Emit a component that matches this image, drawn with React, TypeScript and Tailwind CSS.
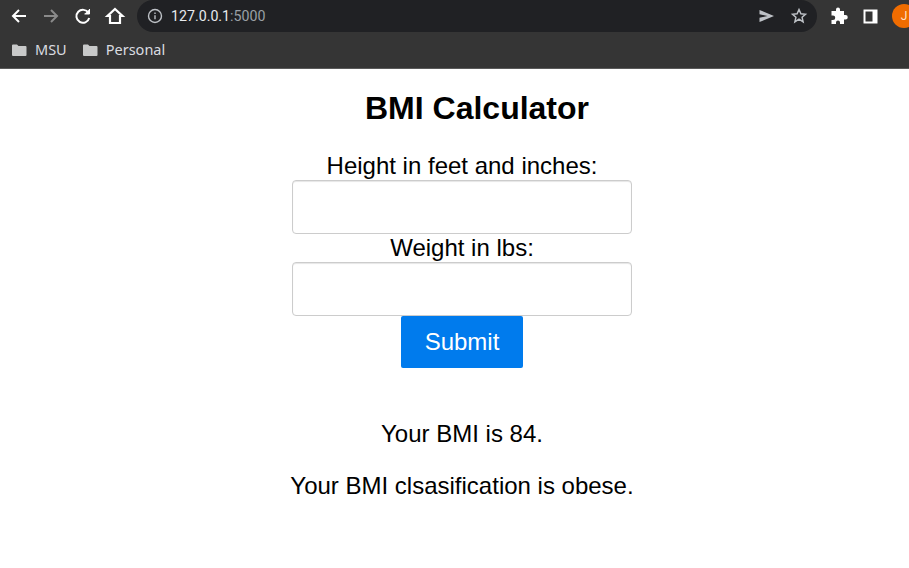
import React from "react";

const Folder = () => (
  <svg width="16" height="16" viewBox="0 0 16 16" fill="#c8c9c9" className="shrink-0">
    <path d="M1 3.500a1 1 0 0 1 1-1h4l1.500 1.500H14.500a1 1 0 0 1 1 1V13a1 1 0 0 1-1 1H2a1 1 0 0 1-1-1z" />
  </svg>
);

const Toolbar = () => (
  <div className="h-[69px] bg-[#353535] border-b border-[#5a5a5a] font-['Roboto',sans-serif] overflow-hidden shrink-0">
    <div className="h-[32px] flex items-center w-[920px]">
      <div className="flex items-center w-[137px] shrink-0 pl-[8px] gap-[10px]">
        <svg width="22" height="22" viewBox="0 0 22 22" fill="none" stroke="#ffffff" strokeWidth="2">
          <path d="M18 11H5M11 5l-6 6 6 6" />
        </svg>
        <svg width="22" height="22" viewBox="0 0 22 22" fill="none" stroke="#8a8a8a" strokeWidth="2">
          <path d="M4 11h13M11 5l6 6-6 6" />
        </svg>
        <svg width="22" height="22" viewBox="0 0 22 22" fill="none" stroke="#ffffff" strokeWidth="2">
          <path d="M16.500 8a6.500 6.500 0 1 0 .7 5" />
          <path d="M17.500 4v5h-5" fill="#ffffff" strokeWidth="1" />
        </svg>
        <svg width="22" height="22" viewBox="0 0 22 22" fill="none" stroke="#ffffff" strokeWidth="2.200">
          <path d="M11 4l7.500 7H16v7H6v-7H3.500z" />
        </svg>
      </div>
      <div className="w-[680px] shrink-0 h-[32px] rounded-full bg-[#202124] flex items-center pl-[10px] pr-[9px]">
        <svg width="16" height="16" viewBox="0 0 16 16" fill="none" stroke="#bdc1c6" strokeWidth="1.400">
          <circle cx="8" cy="8" r="6.500" />
          <path d="M8 7.200v4M8 4.500v1.500" />
        </svg>
        <span className="ml-[8px] text-[14.200px] leading-none text-[#e8eaed]">
          127.0.0.1<span className="text-[#9aa0a6]">:5000</span>
        </span>
        <div className="ml-auto flex items-center gap-[14px]">
          <svg width="18" height="18" viewBox="0 0 18 18" fill="#bdc1c6">
            <path d="M1.500 3 16 9 1.500 15V10.800L9.500 9 1.500 7.200z" />
          </svg>
          <svg width="18" height="18" viewBox="0 0 18 18" fill="none" stroke="#bdc1c6" strokeWidth="1.500">
            <path d="M9 2.500l1.900 4.200 4.600.5-3.400 3.100 1 4.500L9 12.100l-4.100 2.700 1-4.500-3.400-3.100 4.600-.5z" />
          </svg>
        </div>
      </div>
      <div className="flex items-center ml-[12px] gap-[13px]">
        <svg width="19" height="19" viewBox="0 0 19 19" fill="#ffffff" className="shrink-0">
          <path d="M7 2.500a2 2 0 0 1 4 0V4h4v4h1.500a2.200 2.200 0 0 1 0 4.500H15V17h-4v-1.500a2 2 0 0 0-4 0V17H2.500v-4H4a2.200 2.200 0 0 0 0-4.500H2.500V4H7z" />
        </svg>
        <svg width="19" height="19" viewBox="0 0 19 19" fill="none" className="shrink-0">
          <path d="M2.500 2.500h14v14h-14z" fill="#ffffff" />
          <path d="M4.500 4.500h7v10h-7z" fill="#353535" />
        </svg>
        <div className="w-[24px] h-[24px] -ml-[1px] rounded-full bg-[#f06c00] shrink-0 flex items-center justify-center text-[12px] text-[#ffe0c8]">
          J
        </div>
      </div>
    </div>
    <div className="h-[35px] flex items-center pl-[11px] text-[14.500px] text-[#dadce0] font-['Noto_Sans',sans-serif]">
      <div className="flex items-center gap-[8px]">
        <Folder />
        <span>MSU</span>
      </div>
      <div className="flex items-center gap-[8px] ml-[15px]">
        <Folder />
        <span>Personal</span>
      </div>
    </div>
  </div>
);

const App = () => {
  return (
    <div className="w-[909px] h-[568px] bg-white overflow-hidden flex flex-col text-black font-['Liberation_Sans',Arial,sans-serif]">
      <Toolbar />
      <div className="pl-[15px] flex flex-col items-center text-[24px] leading-[27.600px]">
        <h1 className="pl-[30px] pt-[21px] text-[32px] leading-[36.800px] font-bold">BMI Calculator</h1>
        <label className="mt-[25px] mb-[1px] block">Height in feet and inches:</label>
        <input className="block w-[340px] h-[54px] border border-[#cccccc] rounded-[4px] bg-white shadow-[inset_0_1px_1px_rgba(0,0,0,0.1)]" />
        <label className="block">Weight in lbs:</label>
        <input className="block w-[340px] h-[54px] border border-[#cccccc] rounded-[4px] bg-white shadow-[inset_0_1px_1px_rgba(0,0,0,0.1)]" />
        <button className="w-[122px] h-[52px] bg-[#007bed] text-white rounded-[2px]">Submit</button>
        <p className="mt-[52px]">Your BMI is 84.</p>
        <p className="mt-[24px]">Your BMI clsasification is obese.</p>
      </div>
    </div>
  );
};

export default App;
